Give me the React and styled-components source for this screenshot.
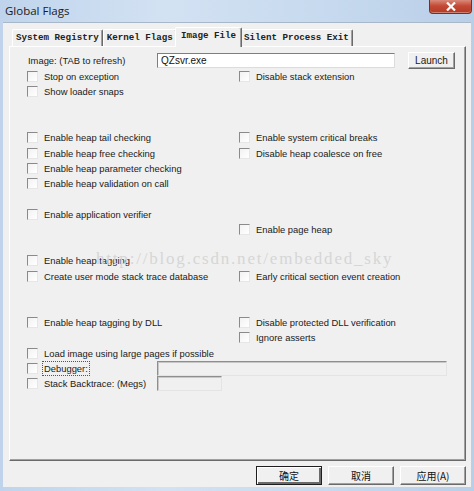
import styled, { createGlobalStyle } from "styled-components";

const GlobalStyle = createGlobalStyle`
  body {
    margin: 0;
    background: #c9dbef;
  }
`;

const leftRows = [
  [1, "Stop on exception"],
  [2, "Show loader snaps"],
  [5, "Enable heap tail checking"],
  [6, "Enable heap free checking"],
  [7, "Enable heap parameter checking"],
  [8, "Enable heap validation on call"],
  [10, "Enable application verifier"],
  [13, "Enable heap tagging"],
  [14, "Create user mode stack trace database"],
  [17, "Enable heap tagging by DLL"],
  [19, "Load image using large pages if possible"],
];

const rightRows = [
  [1, "Disable stack extension"],
  [5, "Enable system critical breaks"],
  [6, "Disable heap coalesce on free"],
  [11, "Enable page heap"],
  [14, "Early critical section event creation"],
  [17, "Disable protected DLL verification"],
  [18, "Ignore asserts"],
];

const tabs = ["System Registry", "Kernel Flags", "Image File", "Silent Process Exit"];

const App = () => {
  return (
    <>
      <GlobalStyle />
      <Window>
        <TitleBar>
          <Title>Global Flags</Title>
          <CloseButton>
            <svg width="12" height="9" viewBox="0 0 12 9">
              <path d="M2 0.5 L10 8.5 M10 0.5 L2 8.5" stroke="#fff" strokeWidth="2.2" />
            </svg>
          </CloseButton>
        </TitleBar>
        <Frame>
          <Client>
            <Tabs>
              {tabs.map((t) => (
                <Tab key={t} $active={t === "Image File"}>
                  {t}
                </Tab>
              ))}
            </Tabs>
            <Panel>
              <ImageRow>
                <ImageLabel>Image: (TAB to refresh)</ImageLabel>
                <TextInput>QZsvr.exe</TextInput>
                <SmallButton>Launch</SmallButton>
              </ImageRow>
              {leftRows.map(([row, label]) => (
                <Check key={label} $row={row} $col={1}>
                  <Box />
                  <span>{label}</span>
                </Check>
              ))}
              {rightRows.map(([row, label]) => (
                <Check key={label} $row={row} $col={2}>
                  <Box />
                  <span>{label}</span>
                </Check>
              ))}
              <FieldRow $row={20}>
                <FieldCheck>
                  <Box />
                  <Focused>Debugger:</Focused>
                </FieldCheck>
                <DisabledInput $width={290} />
              </FieldRow>
              <FieldRow $row={21}>
                <FieldCheck>
                  <Box />
                  <span>Stack Backtrace: (Megs)</span>
                </FieldCheck>
                <DisabledInput $width={65} />
              </FieldRow>
              <Watermark>http://blog.csdn.net/embedded_sky</Watermark>
            </Panel>
            <ButtonBar>
              <DialogButton $default>确定</DialogButton>
              <DialogButton>取消</DialogButton>
              <DialogButton>应用(A)</DialogButton>
            </ButtonBar>
          </Client>
        </Frame>
      </Window>
    </>
  );
};

export default App;

const Window = styled.div`
  width: 474px;
  height: 491px;
  display: flex;
  flex-direction: column;
  background: linear-gradient(90deg, #bfd4ec 0%, #d3e2f3 35%, #c6d9ee 70%, #b9cfe8 100%);
  overflow: hidden;
`;

const TitleBar = styled.div`
  height: 22px;
  flex-shrink: 0;
  display: flex;
  align-items: flex-start;
  justify-content: space-between;
  padding: 0 2px 0 5px;
`;

const Title = styled.span`
  font-family: "Open Sans", "Noto Sans", sans-serif;
  font-size: 11.5px;
  color: #1b1b1b;
  line-height: 22px;
`;

const CloseButton = styled.div`
  width: 41px;
  height: 13px;
  display: flex;
  align-items: center;
  justify-content: center;
  background: linear-gradient(#d98a7b, #c44a35 45%, #b33a24);
  border: 1px solid #7a2e22;
  border-top: none;
  border-radius: 0 0 4px 4px;
  box-shadow: inset 0 -1px 0 rgba(255, 255, 255, 0.35);
`;

const Frame = styled.div`
  flex: 1;
  display: flex;
  padding: 0 3px 4px 3px;
`;

const Client = styled.div`
  flex: 1;
  display: flex;
  flex-direction: column;
  background: #f0f0f0;
  border-top: 1px solid #a9b8c9;
  padding: 5px 5px 0 6px;
`;

const Tabs = styled.div`
  display: flex;
  align-items: flex-end;
  height: 18px;
  padding-left: 3px;
  position: relative;
  z-index: 1;
`;

const Tab = styled.div`
  font-family: "Liberation Mono", monospace;
  font-size: 9.2px;
  font-weight: bold;
  color: #222;
  height: ${(p) => (p.$active ? "19px" : "16px")};
  line-height: ${(p) => (p.$active ? "15px" : "16px")};
  padding: 0 ${(p) => (p.$active ? "5px" : "3px")};
  margin: 0 ${(p) => (p.$active ? "-2px" : "0")} ${(p) => (p.$active ? "-1px" : "0")};
  border-top: 1px solid #ffffff;
  border-left: 1px solid #ffffff;
  border-right: 1px solid #6a6a6a;
  box-shadow: inset -1px 0 0 #a0a0a0;
  border-radius: 2px 2px 0 0;
  background: #f0f0f0;
  white-space: nowrap;
  position: relative;
  z-index: ${(p) => (p.$active ? 2 : 0)};
`;

const Panel = styled.div`
  position: relative;
  height: 415px;
  box-sizing: border-box;
  border-top: 1px solid #ffffff;
  border-left: 1px solid #ffffff;
  border-right: 1px solid #6a6a6a;
  border-bottom: 1px solid #6a6a6a;
  box-shadow: inset -1px -1px 0 #a0a0a0;
  padding: 6px 0 0 17px;
  display: grid;
  grid-template-columns: 212px 1fr;
  grid-template-rows: repeat(22, 15.4px);
  align-content: start;
  font-family: "Liberation Sans", Arial, sans-serif;
  font-size: 9.4px;
  color: #1a1a1a;
`;

const ImageRow = styled.div`
  grid-row: 1;
  grid-column: 1 / 3;
  display: flex;
  align-items: center;
  padding-left: 1px;
`;

const ImageLabel = styled.span`
  width: 129px;
  flex-shrink: 0;
  white-space: nowrap;
`;

const TextInput = styled.div`
  width: 238px;
  height: 15px;
  flex-shrink: 0;
  box-sizing: border-box;
  background: #ffffff;
  border: 1px solid;
  border-color: #7e7e7e #dcdcdc #dcdcdc #7e7e7e;
  padding-left: 3px;
  font-size: 10px;
  line-height: 13px;
  color: #111;
`;

const SmallButton = styled.div`
  width: 47px;
  height: 17px;
  margin-left: 13px;
  flex-shrink: 0;
  box-sizing: border-box;
  border: 1px solid;
  border-color: #ffffff #6a6a6a #6a6a6a #ffffff;
  box-shadow: inset -1px -1px 0 #a0a0a0;
  background: #f0f0f0;
  text-align: center;
  line-height: 15px;
  font-size: 10px;
`;

const Check = styled.label`
  grid-row: ${(p) => p.$row + 1};
  grid-column: ${(p) => p.$col};
  display: flex;
  align-items: center;
  gap: 6px;
  white-space: nowrap;
`;

const FieldCheck = styled.div`
  display: flex;
  align-items: center;
  gap: 6px;
  white-space: nowrap;
`;

const Box = styled.span`
  width: 11px;
  height: 11px;
  flex-shrink: 0;
  box-sizing: border-box;
  border: 1px solid;
  border-color: #8a8a8a #e6e6e6 #e6e6e6 #8a8a8a;
  background: linear-gradient(135deg, #f2f2f2, #ffffff);
`;

const Focused = styled.span`
  outline: 1px dotted #555;
  outline-offset: 1px;
`;

const FieldRow = styled.div`
  grid-row: ${(p) => p.$row + 1};
  grid-column: 1 / 3;
  display: grid;
  grid-template-columns: 130px auto;
  align-items: center;
`;

const DisabledInput = styled.div`
  width: ${(p) => p.$width}px;
  height: 15px;
  box-sizing: border-box;
  border: 1px solid;
  border-color: #8e8e8e #e4e4e4 #e4e4e4 #8e8e8e;
  box-shadow: inset 1px 1px 0 #c8c8c8;
  background: #f0f0f0;
`;

const Watermark = styled.div`
  position: absolute;
  left: 86px;
  top: 202px;
  font-family: "Liberation Serif", serif;
  font-size: 17px;
  letter-spacing: 1.8px;
  color: #d6d6d6;
  white-space: nowrap;
  pointer-events: none;
`;

const ButtonBar = styled.div`
  display: flex;
  justify-content: flex-end;
  gap: 6px;
  margin-top: 5px;
`;

const DialogButton = styled.div`
  width: 66px;
  height: 19px;
  box-sizing: border-box;
  border: 1px solid;
  border-color: ${(p) => (p.$default ? "#1e1e1e" : "#ffffff #6a6a6a #6a6a6a #ffffff")};
  box-shadow: ${(p) =>
    p.$default
      ? "inset 1px 1px 0 #ffffff, inset -2px -2px 0 #6a6a6a"
      : "inset -1px -1px 0 #a0a0a0"};
  background: #f0f0f0;
  font-family: "Noto Sans CJK SC", "Liberation Sans", sans-serif;
  font-size: 10px;
  line-height: 17px;
  text-align: center;
  color: #111;
`;
